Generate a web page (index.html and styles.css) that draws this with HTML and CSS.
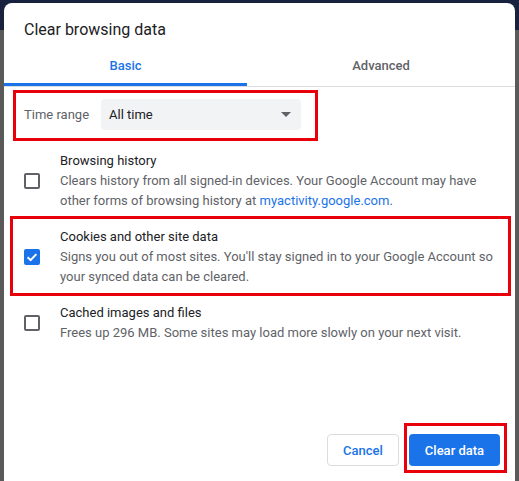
FILE: index.html
```html
<!DOCTYPE html>
<html lang="en">
<head>
<meta charset="utf-8">
<title>Clear browsing data</title>
<link rel="stylesheet" href="styles.css">
</head>
<body>
<div class="backdrop">
  <div class="dialog">
    <h1 class="title">Clear browsing data</h1>
    <div class="tabs">
      <div class="tab tab-active">Basic</div>
      <div class="tab tab-wide">Advanced</div>
    </div>
    <div class="range-row">
      <span class="range-label">Time range</span>
      <div class="select">
        <span>All time</span>
        <span class="arrow"></span>
      </div>
    </div>
    <div class="items">
      <div class="item">
        <span class="checkbox"></span>
        <div class="item-text">
          <div class="item-title">Browsing history</div>
          <div class="item-desc">Clears history from all signed-in devices. Your Google Account may have other forms of browsing history at <a class="link" href="#">myactivity.google.com</a>.</div>
        </div>
      </div>
      <div class="item">
        <span class="checkbox checked">
          <svg viewBox="0 0 16 16" width="16" height="16"><path d="M3.6 8.2 L6.6 11.1 L12.4 5.1" fill="none" stroke="#fff" stroke-width="2"/></svg>
        </span>
        <div class="item-text">
          <div class="item-title">Cookies and other site data</div>
          <div class="item-desc">Signs you out of most sites. You'll stay signed in to your Google Account so your synced data can be cleared.</div>
        </div>
      </div>
      <div class="item">
        <span class="checkbox"></span>
        <div class="item-text">
          <div class="item-title">Cached images and files</div>
          <div class="item-desc">Frees up 296 MB. Some sites may load more slowly on your next visit.</div>
        </div>
      </div>
    </div>
    <div class="buttons">
      <button class="btn btn-cancel">Cancel</button>
      <button class="btn btn-primary">Clear data</button>
    </div>
  </div>
</div>
<div class="mark mark-range"></div>
<div class="mark mark-cookies"></div>
<div class="mark mark-clear"></div>
</body>
</html>
```
FILE: styles.css
```css
html, body {
  margin: 0;
  padding: 0;
}
body {
  width: 519px;
  height: 481px;
  overflow: hidden;
  position: relative;
  font-family: Roboto, "Liberation Sans", Arial, sans-serif;
  background: linear-gradient(to bottom, #18223f 0, #18223f 30px, #5a5a5a 30px, #5a5a5a 100%);
}
.backdrop {
  padding: 3px 4px 0 4px;
  height: 478px;
}
.dialog {
  width: 511px;
  height: 478px;
  background: #fff;
  border-radius: 8px 8px 0 0;
  display: flex;
  flex-direction: column;
  box-sizing: border-box;
}
.title {
  margin: 17px 0 0 20px;
  font-size: 16px;
  line-height: 20px;
  font-weight: 400;
  color: #202124;
}
.tabs {
  margin-top: 4px;
  display: flex;
  border-bottom: 1px solid #dadce0;
}
.tab {
  width: 243px;
  height: 42px;
  display: flex;
  align-items: center;
  justify-content: center;
  font-size: 13px;
  font-weight: 500;
  color: #5f6368;
}
.tab-wide {
  flex: 1;
}
.tab-active {
  color: #1a73e8;
  box-shadow: inset 0 -3px 0 #1a73e8;
}
.range-row {
  display: flex;
  align-items: center;
  margin-top: 12px;
  padding-left: 20px;
}
.range-label {
  width: 77px;
  font-size: 13px;
  color: #5f6368;
}
.select {
  width: 200px;
  height: 31px;
  box-sizing: border-box;
  background: #f1f3f4;
  border-radius: 4px;
  display: flex;
  align-items: center;
  justify-content: space-between;
  padding: 0 10px 0 8px;
  font-size: 13px;
  color: #202124;
}
.arrow {
  width: 0;
  height: 0;
  border-left: 5px solid transparent;
  border-right: 5px solid transparent;
  border-top: 5px solid #5f6368;
}
.items {
  margin-top: 13px;
  display: flex;
  flex-direction: column;
}
.item {
  display: flex;
  align-items: center;
  padding: 8px 10px 8px 20px;
}
.checkbox {
  width: 16px;
  height: 16px;
  box-sizing: border-box;
  border: 2px solid #5f6368;
  border-radius: 2px;
  flex-shrink: 0;
  margin-right: 20px;
  display: flex;
}
.checkbox.checked {
  background: #1a73e8;
  border: none;
}
.item-text {
  flex: 1;
}
.item-title {
  font-size: 13px;
  line-height: 20px;
  color: #202124;
}
.item-desc {
  font-size: 13px;
  line-height: 20px;
  color: #5f6368;
}
.link {
  color: #1a73e8;
  text-decoration: none;
}
.buttons {
  margin-top: auto;
  display: flex;
  justify-content: flex-end;
  gap: 10px;
  padding: 0 15px 15px 0;
}
.btn {
  height: 32px;
  box-sizing: border-box;
  border-radius: 4px;
  font-family: Roboto, "Liberation Sans", Arial, sans-serif;
  font-size: 13px;
  font-weight: 500;
  padding: 0 15px;
  cursor: pointer;
}
.btn-cancel {
  width: 72px;
  background: #fff;
  color: #1a73e8;
  border: 1px solid #dadce0;
}
.btn-primary {
  width: 91px;
  background: #1a73e8;
  color: #fff;
  border: none;
}
.mark {
  position: absolute;
  border: 3px solid #e8000b;
  box-sizing: border-box;
}
.mark-range {
  left: 13px;
  top: 90px;
  width: 305px;
  height: 51px;
}
.mark-cookies {
  left: 10px;
  top: 216px;
  width: 501px;
  height: 80px;
}
.mark-clear {
  left: 404px;
  top: 423px;
  width: 103px;
  height: 50px;
}
```
